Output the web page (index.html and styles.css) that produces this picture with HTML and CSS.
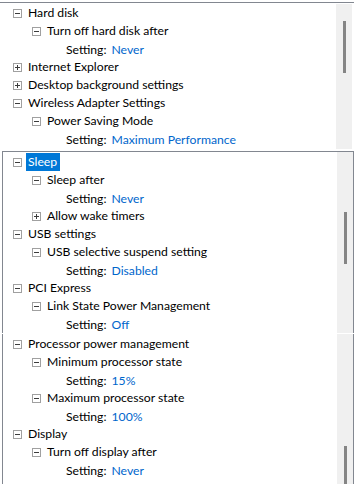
FILE: index.html
```html
<!DOCTYPE html>
<html>
<head>
<meta charset="utf-8">
<link rel="stylesheet" href="styles.css">
</head>
<body>
<div class="panel panel-first">
  <div class="tree">
    <div class="row l1"><span class="box minus"></span><span class="text">Hard disk</span></div>
    <div class="row l2"><span class="box minus"></span><span class="text">Turn off hard disk after</span></div>
    <div class="row l3"><span class="label">Setting:</span><span class="value">Never</span></div>
    <div class="row l1"><span class="box plus"></span><span class="text">Internet Explorer</span></div>
    <div class="row l1"><span class="box plus"></span><span class="text">Desktop background settings</span></div>
    <div class="row l1"><span class="box minus"></span><span class="text">Wireless Adapter Settings</span></div>
    <div class="row l2"><span class="box minus"></span><span class="text">Power Saving Mode</span></div>
    <div class="row l3"><span class="label">Setting:</span><span class="value">Maximum Performance</span></div>
  </div>
  <div class="scrollbar s1"><div class="thumb t1"></div></div>
</div>

<div class="panel panel-boxed panel-second">
  <div class="tree">
    <div class="row l1"><span class="box minus"></span><span class="text selected">Sleep</span></div>
    <div class="row l2"><span class="box minus"></span><span class="text">Sleep after</span></div>
    <div class="row l3"><span class="label">Setting:</span><span class="value">Never</span></div>
    <div class="row l2"><span class="box plus"></span><span class="text">Allow wake timers</span></div>
    <div class="row l1"><span class="box minus"></span><span class="text">USB settings</span></div>
    <div class="row l2"><span class="box minus"></span><span class="text">USB selective suspend setting</span></div>
    <div class="row l3"><span class="label">Setting:</span><span class="value">Disabled</span></div>
    <div class="row l1"><span class="box minus"></span><span class="text">PCI Express</span></div>
    <div class="row l2"><span class="box minus"></span><span class="text">Link State Power Management</span></div>
    <div class="row l3"><span class="label">Setting:</span><span class="value">Off</span></div>
  </div>
  <div class="scrollbar s2"><div class="thumb t2"></div></div>
</div>

<div class="panel panel-boxed panel-third">
  <div class="tree">
    <div class="row l1"><span class="box minus"></span><span class="text">Processor power management</span></div>
    <div class="row l2"><span class="box minus"></span><span class="text">Minimum processor state</span></div>
    <div class="row l3"><span class="label">Setting:</span><span class="value">15%</span></div>
    <div class="row l2"><span class="box minus"></span><span class="text">Maximum processor state</span></div>
    <div class="row l3"><span class="label">Setting:</span><span class="value">100%</span></div>
    <div class="row l1"><span class="box minus"></span><span class="text">Display</span></div>
    <div class="row l2"><span class="box minus"></span><span class="text">Turn off display after</span></div>
    <div class="row l3"><span class="label">Setting:</span><span class="value">Never</span></div>
  </div>
  <div class="scrollbar s3"><div class="thumb t3"></div></div>
</div>
</body>
</html>
```

FILE: styles.css
```css
html, body {
  margin: 0;
  padding: 0;
  background: #ffffff;
  height: 484px;
  overflow: hidden;
}

body {
  font-family: Lato, "Noto Sans", sans-serif;
  font-size: 12.2px;
  color: #000000;
}

.panel {
  display: flex;
  box-sizing: border-box;
  border-top: 1px solid #828790;
}

.panel-first {
  margin-top: 2px;
  width: 354px;
  height: 147px;
  padding-right: 2px;
}

.panel-boxed {
  margin-left: 2px;
  width: 352px;
  border-left: 1px solid #828790;
  border-right: 1px solid #828790;
}

.panel-second {
  margin-top: 2px;
  height: 182px;
  border-top: 1px solid #828790;
}

.panel-third {
  margin-top: 1px;
  height: 160px;
  border-top: none;
}

.tree {
  flex: 1;
  padding-top: 1px;
}

.panel-first .tree {
  padding-left: 13px;
}

.panel-boxed .tree {
  padding-left: 10px;
}

.row {
  height: 18px;
  display: flex;
  align-items: center;
  white-space: nowrap;
}

.l2 {
  padding-left: 19px;
}

.l3 {
  padding-left: 53px;
}

.box {
  width: 9px;
  height: 9px;
  box-sizing: border-box;
  border: 1px solid #a0a0a0;
  position: relative;
  margin-right: 6px;
  flex: none;
}

.box::before {
  content: "";
  position: absolute;
  left: 1px;
  top: 3px;
  width: 5px;
  height: 1px;
  background: #3c3c3c;
}

.box.plus::after {
  content: "";
  position: absolute;
  left: 3px;
  top: 1px;
  width: 1px;
  height: 5px;
  background: #3c3c3c;
}

.text {
  line-height: 18px;
}

.selected {
  background: #0078d7;
  color: #ffffff;
  margin-left: -2px;
  padding: 0 3px 0 2px;
}

.value {
  color: #0066cc;
  margin-left: 5px;
}

.scrollbar {
  width: 16px;
  flex: none;
  background: #f0f0f0;
  display: flex;
  justify-content: center;
  box-sizing: border-box;
}

.s1 {
  margin-top: 1px;
  padding-top: 17px;
}

.s2 {
  padding-top: 60px;
}

.s3 {
  padding-top: 112px;
}

.thumb {
  width: 3px;
  background: #858585;
  margin-left: 1px;
}

.t1 { height: 52px; }
.t2 { height: 52px; }
.t3 { height: 60px; }
```
